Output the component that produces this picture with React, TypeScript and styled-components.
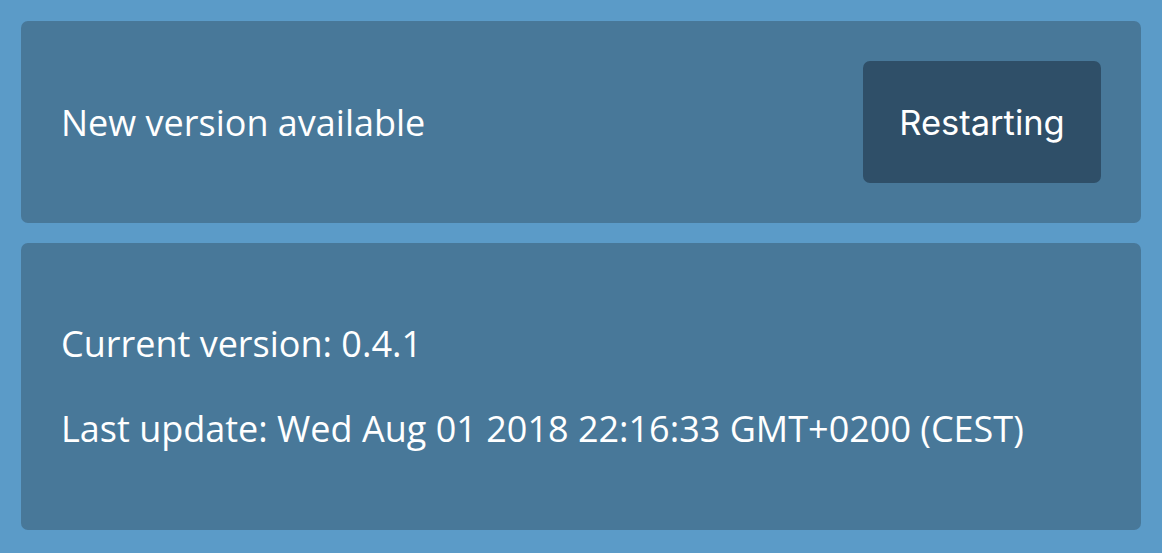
import * as React from 'react';
import styled, { createGlobalStyle } from 'styled-components';

const GlobalStyle = createGlobalStyle`
  html, body {
    margin: 0;
    padding: 0;
    background: #5b9bc8;
  }
  body {
    font-family: "Open Sans", "Liberation Sans", sans-serif;
    color: #ffffff;
  }
`;

const Page = styled.div`
  padding: 21px;
  display: flex;
  flex-direction: column;
  gap: 20px;
`;

const Card = styled.div`
  background: #487899;
  border-radius: 7px;
  padding: 40px;
`;

const UpdateRow = styled.div`
  display: flex;
  align-items: center;
  justify-content: space-between;
`;

const Title = styled.span`
  font-size: 36px;
`;

const Button = styled.button`
  width: 238px;
  height: 122px;
  border: none;
  border-radius: 7px;
  background: #2f4f68;
  color: #ffffff;
  font-family: Inter, Roboto, "Liberation Sans", sans-serif;
  font-size: 34.5px;
  cursor: pointer;
`;

const Info = styled.p`
  font-size: 36px;
  line-height: 48px;
  margin: 37px 0;
`;

export default function App() {
  return (
    <>
      <GlobalStyle />
      <Page>
        <Card>
          <UpdateRow>
            <Title>New version available</Title>
            <Button>Restarting</Button>
          </UpdateRow>
        </Card>
        <Card>
          <Info>Current version: 0.4.1</Info>
          <Info>Last update: Wed Aug 01 2018 22:16:33 GMT+0200 (CEST)</Info>
        </Card>
      </Page>
    </>
  );
}
